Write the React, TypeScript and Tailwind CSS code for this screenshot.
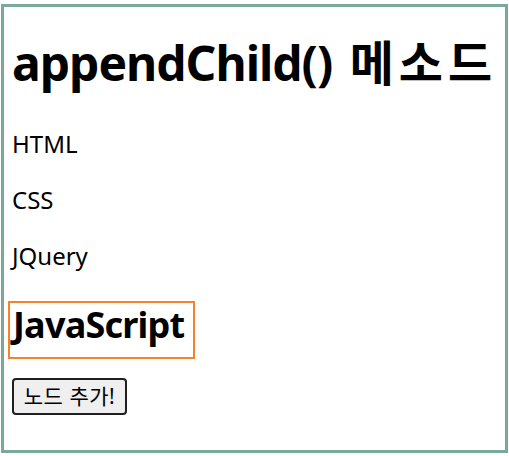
import { useState } from 'react';

const font = { fontFamily: '"Noto Sans", "Noto Sans CJK KR", sans-serif' };

function App() {
    const [extra, setExtra] = useState<string[]>([]);

    const addNode = () => {
        // append a new paragraph to the list, like appendChild()
        setExtra(prev => [...prev, 'JavaScript']);
    };

    return (
        <div className="bg-white w-[509px] h-[456px] overflow-hidden text-black" style={font}>
            <div className="ml-[1px] mt-[4px] w-[507px] h-[449px] border-[3px] border-[#7aa997] pl-[4px] flex flex-col items-start">
                <h1 className="ml-[4px] mt-[24px] text-[48px] leading-[64px] font-bold whitespace-nowrap">
                    <span className="tracking-[-1px]">appendChild()</span>
                    <span className="tracking-[5px]"> 메소드</span>
                </h1>
                <p className="ml-[4px] mt-[33px] text-[24px] leading-[32px]">HTML</p>
                <p className="ml-[4px] mt-[24px] text-[24px] leading-[32px]">CSS</p>
                <p className="ml-[4px] mt-[24px] text-[24px] leading-[32px]">JQuery</p>
                {extra.map((t, i) => (
                    <p key={i} className="ml-[4px] mt-[24px] text-[24px] leading-[32px]">{t}</p>
                ))}
                <h2 className="mt-[29px] w-[187px] h-[58px] border-2 border-[#f5822a] pl-[3px] text-[36px] leading-[44px] font-bold tracking-[-0.8px] whitespace-nowrap">
                    JavaScript
                </h2>
                <button
                    type="button"
                    onClick={addNode}
                    className="ml-[4px] mt-[19px] w-[115px] h-[37px] border-2 border-[#1f1f1f] rounded-[4px] bg-[#efefef] text-[21px] leading-none tracking-[0.5px]"
                >
                    노드 추가!
                </button>
            </div>
        </div>
    );
}

export default App;
